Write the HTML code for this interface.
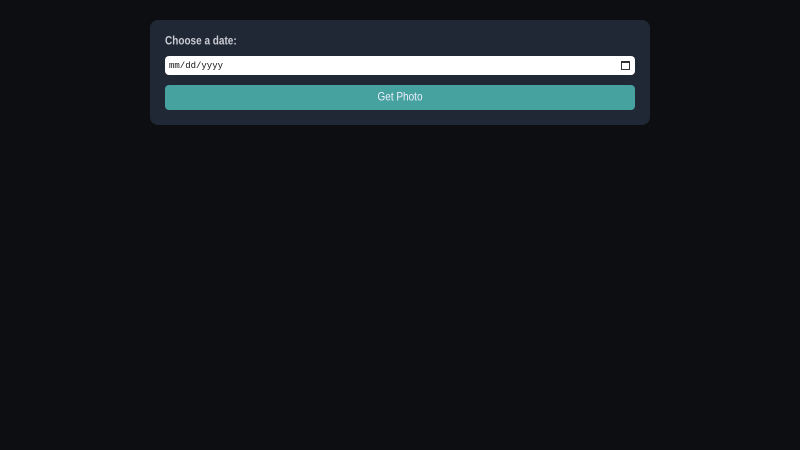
<!DOCTYPE html><html><head><style>
body{margin:0;background:#0d0e11;width:800px;height:450px;font-family:"Liberation Sans",sans-serif}
.card{position:absolute;left:150px;top:20px;width:500px;height:105px;background:#212835;border-radius:8px}
.l{position:absolute;left:15px;top:16px;color:#c9ccd2;font-weight:bold;font-size:10px;transform:scaleY(1.15);transform-origin:0 50%}
.i{position:absolute;left:15px;top:36px;width:470px;height:19px;background:#fff;border-radius:4px}
.i span{position:absolute;left:4px;top:5px;font-family:"Liberation Mono",monospace;font-size:9px;color:#111}
.cal{position:absolute;right:5px;top:5px;width:7px;height:6px;border:1px solid #333;border-top-width:2px}
.b{position:absolute;left:15px;top:65px;width:470px;height:25px;background:#45a29e;border-radius:4px;color:#eef;font-size:10px;text-align:center;line-height:25px}
.b span{display:inline-block;transform:scaleY(1.15)}
</style></head><body><div class="card"><div class="l">Choose a date:</div><div class="i"><span>mm/dd/yyyy</span><div class="cal"></div></div><div class="b"><span>Get Photo</span></div></div></body></html>
